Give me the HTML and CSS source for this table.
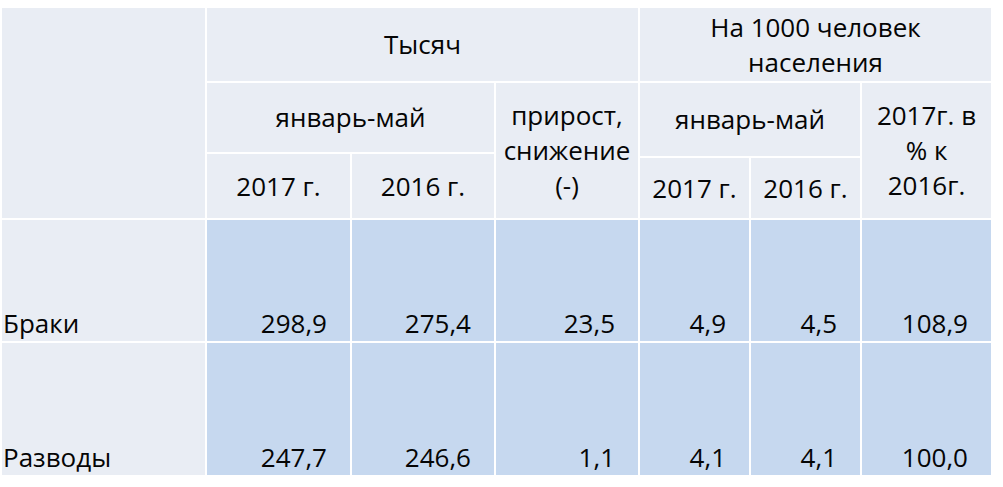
FILE: index.html
```html
<!DOCTYPE html>
<html lang="ru">
<head>
<meta charset="utf-8">
<link rel="stylesheet" href="styles.css">
</head>
<body>
<div class="table">
  <div class="cell hd corner"></div>
  <div class="cell hd thousand">Тысяч</div>
  <div class="cell hd per1000">На 1000 человек<br>населения</div>
  <div class="cell hd jm-left">январь-май</div>
  <div class="cell hd growth">прирост,<br>снижение<br>(-)</div>
  <div class="cell hd jm-right">январь-май</div>
  <div class="cell hd pct">2017г. в<br>% к<br>2016г.</div>
  <div class="cell hd y1">2017 г.</div>
  <div class="cell hd y2">2016 г.</div>
  <div class="cell hd y3">2017 г.</div>
  <div class="cell hd y4">2016 г.</div>

  <div class="cell label">Браки</div>
  <div class="cell num">298,9</div>
  <div class="cell num">275,4</div>
  <div class="cell num">23,5</div>
  <div class="cell num">4,9</div>
  <div class="cell num">4,5</div>
  <div class="cell num">108,9</div>

  <div class="cell label">Разводы</div>
  <div class="cell num">247,7</div>
  <div class="cell num">246,6</div>
  <div class="cell num">1,1</div>
  <div class="cell num">4,1</div>
  <div class="cell num">4,1</div>
  <div class="cell num">100,0</div>
</div>
</body>
</html>
```

FILE: styles.css
```css
html, body {
  margin: 0;
  padding: 0;
  background: #ffffff;
}

body {
  padding: 8px 0 0 2px;
  font-family: "Open Sans", "DejaVu Sans", sans-serif;
  font-size: 26px;
  line-height: 35px;
  color: #050505;
}

.table {
  display: grid;
  grid-template-columns: 203px 143px 142px 142px 109px 109px 129px;
  grid-template-rows: 73px 69px 2px 60px 121px 132px;
  gap: 2px;
  width: 989px;
}

.cell {
  display: flex;
  align-items: center;
  justify-content: center;
  text-align: center;
}

.hd {
  background: #e9edf4;
}

.corner { grid-column: 1; grid-row: 1 / 5; }
.thousand { grid-column: 2 / 5; grid-row: 1; }
.per1000 { grid-column: 5 / 8; grid-row: 1; }
.jm-left { grid-column: 2 / 4; grid-row: 2; }
.growth { grid-column: 4; grid-row: 2 / 5; }
.jm-right { grid-column: 5 / 7; grid-row: 2 / 4; }
.pct { grid-column: 7; grid-row: 2 / 5; }
.y1 { grid-column: 2; grid-row: 3 / 5; }
.y2 { grid-column: 3; grid-row: 3 / 5; }
.y3 { grid-column: 5; grid-row: 4; }
.y4 { grid-column: 6; grid-row: 4; }

.label {
  background: #e9edf4;
  align-items: flex-end;
  justify-content: flex-start;
  padding-left: 1px;
}

.num {
  background: #c6d8ef;
  align-items: flex-end;
  justify-content: flex-end;
  padding-right: 23px;
}
```
